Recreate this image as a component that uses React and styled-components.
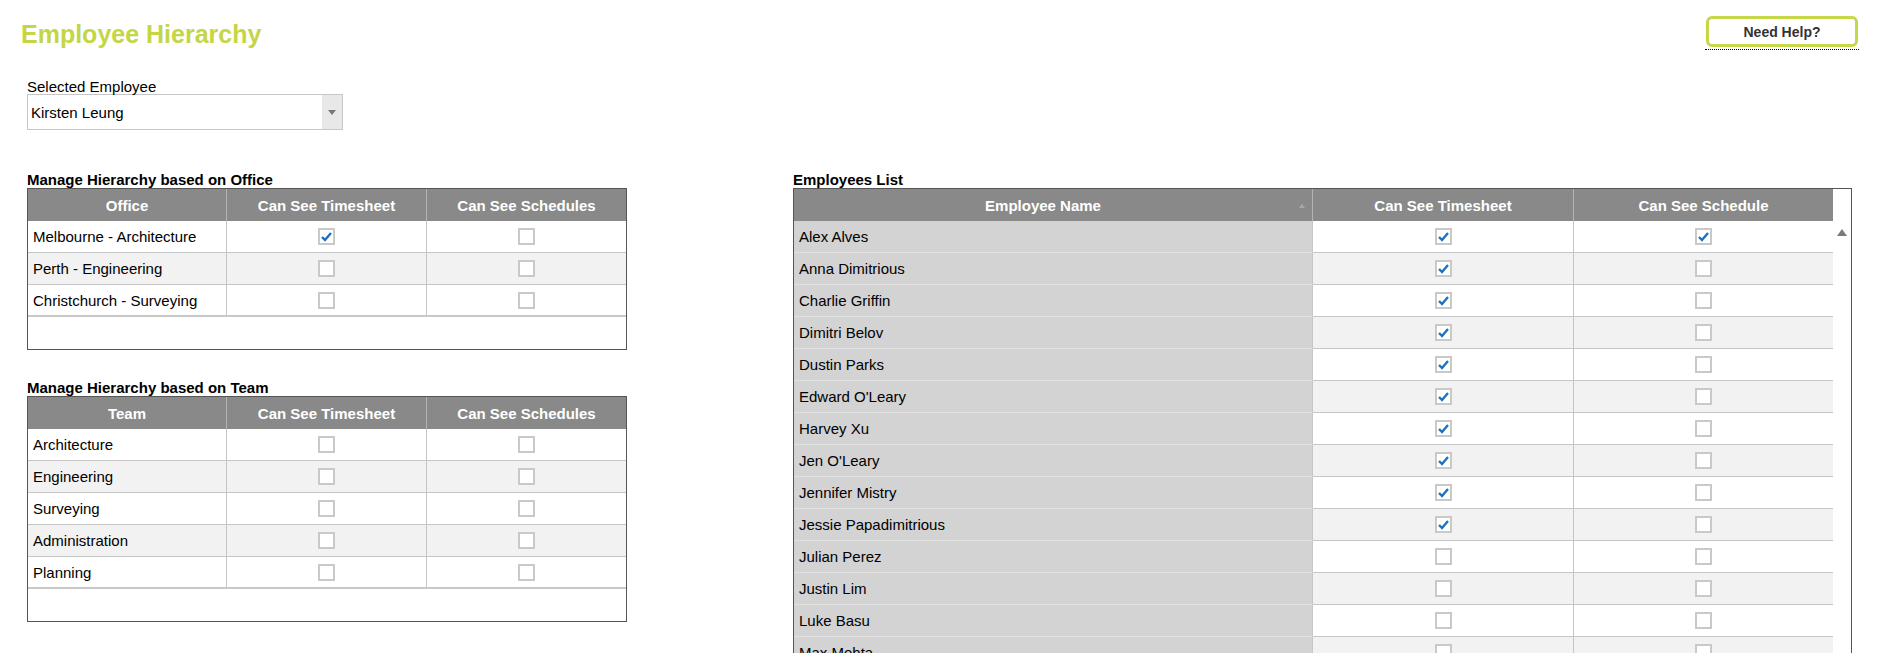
import React from 'react';
import styled, { createGlobalStyle } from 'styled-components';

const GlobalStyle = createGlobalStyle`
  html, body {
    margin: 0;
    padding: 0;
    background: #fff;
    overflow: hidden;
  }
  body {
    font-family: Arial, "Liberation Sans", sans-serif;
    color: #000;
  }
`;

const Page = styled.div`
  width: 1880px;
  height: 653px;
  overflow: hidden;
`;

const TopBar = styled.div`
  display: flex;
  justify-content: space-between;
  align-items: flex-start;
  padding: 0 21px 0 21px;
`;

const Title = styled.h1`
  margin: 19px 0 0;
  font-size: 25px;
  line-height: 30px;
  font-weight: bold;
  color: #c4d645;
`;

const HelpWrap = styled.div`
  margin-top: 16px;
  padding: 0 1px 2px;
  border-bottom: 1px dotted #000;
`;

const HelpButton = styled.button`
  display: block;
  width: 152px;
  height: 31px;
  box-sizing: border-box;
  border: 3px solid #c6d84a;
  border-radius: 6px;
  background: #fff;
  font-family: Arial, "Liberation Sans", sans-serif;
  font-size: 14px;
  font-weight: bold;
  color: #333;
  padding: 0;
`;

const Picker = styled.div`
  margin-top: 29px;
  padding-left: 27px;
`;

const PickerLabel = styled.div`
  font-size: 15px;
  line-height: 15px;
`;

const SelectBox = styled.div`
  display: flex;
  width: 316px;
  height: 36px;
  box-sizing: border-box;
  border: 1px solid #c6c6c6;
`;

const SelectValue = styled.div`
  flex: 1;
  display: flex;
  align-items: center;
  padding-left: 3px;
  font-size: 15px;
`;

const SelectArrow = styled.div`
  width: 20px;
  background: #e8e8e8;
  display: flex;
  align-items: center;
  justify-content: center;
  &::after {
    content: '';
    border-left: 4px solid transparent;
    border-right: 4px solid transparent;
    border-top: 5px solid #777;
  }
`;

const Main = styled.div`
  display: grid;
  grid-template-columns: 600px 1059px;
  column-gap: 166px;
  margin-top: 42px;
  padding-left: 27px;
`;

const Column = styled.div`
  display: flex;
  flex-direction: column;
`;

const Section = styled.section`
  margin-top: ${({ $gap }) => $gap || 0}px;
`;

const SectionTitle = styled.div`
  font-size: 15px;
  line-height: 16px;
  font-weight: bold;
`;

const Box = styled.div`
  border: 1px solid #555;
  box-sizing: border-box;
  padding-bottom: ${({ $tail }) => $tail || 0}px;
`;

const Row = styled.div`
  display: grid;
  grid-template-columns: ${({ $cols }) => $cols};
  height: 32px;
  box-sizing: border-box;
  border-bottom: ${({ $last }) => ($last ? '2px solid #c8c8c8' : '1px solid #c6c6c6')};
  background: ${({ $alt }) => ($alt ? '#f1f2f1' : '#fff')};
`;

const HeadRow = styled.div`
  display: grid;
  grid-template-columns: ${({ $cols }) => $cols};
  height: 32px;
  background: #898989;
`;

const HeadCell = styled.div`
  display: flex;
  align-items: center;
  justify-content: center;
  color: #fff;
  font-size: 15px;
  font-weight: bold;
  border-right: 1px solid #b4b4b4;
  padding-right: ${({ $pr }) => $pr || 0}px;
  position: relative;
  &:last-child {
    border-right: none;
  }
`;

const SortMark = styled.span`
  position: absolute;
  right: 7px;
  top: 15px;
  border-left: 3px solid transparent;
  border-right: 3px solid transparent;
  border-bottom: 4px solid #a9a9a9;
`;

const Cell = styled.div`
  display: flex;
  align-items: center;
  justify-content: ${({ $center }) => ($center ? 'center' : 'flex-start')};
  padding-left: ${({ $center }) => ($center ? 0 : 5)}px;
  font-size: 15px;
  border-right: 1px solid #c6c6c6;
  &:last-child {
    border-right: none;
  }
`;

const NameCell = styled(Cell)`
  background: #d3d3d3;
  border-right: 1px solid #c6c6c6;
`;

const Check = styled.span`
  width: 17px;
  height: 17px;
  box-sizing: border-box;
  border: 2px solid #c9c9c9;
  background: #fff;
  display: flex;
  align-items: center;
  justify-content: center;
`;

const ListFrame = styled.div`
  display: flex;
  height: 470px;
  border: 1px solid #555;
  overflow: hidden;
`;

const ListGrid = styled.div`
  flex: 1;
`;

const NameRow = styled(Row)`
  border-bottom: none;
  & > * {
    border-bottom: 1px solid #c6c6c6;
  }
  & > ${NameCell} {
    border-bottom-color: #e2e2e2;
  }
`;

const ScrollTrack = styled.div`
  width: 18px;
  display: flex;
  justify-content: center;
  padding-top: 40px;
  box-sizing: border-box;
  &::before {
    content: '';
    height: 0;
    border-left: 5px solid transparent;
    border-right: 5px solid transparent;
    border-bottom: 7px solid #7a7a7a;
  }
`;

const Tick = ({ on }) => (
  <Check>
    {on && (
      <svg width="13" height="13" viewBox="0 0 13 13">
        <polyline points="2,7 5,10 11,3" fill="none" stroke="#1f6fbf" strokeWidth="2.4" />
      </svg>
    )}
  </Check>
);

const offices = [
  ['Melbourne - Architecture', true, false],
  ['Perth - Engineering', false, false],
  ['Christchurch - Surveying', false, false],
];

const teams = [
  ['Architecture', false, false],
  ['Engineering', false, false],
  ['Surveying', false, false],
  ['Administration', false, false],
  ['Planning', false, false],
];

const employees = [
  ['Alex Alves', true, true],
  ['Anna Dimitrious', true, false],
  ['Charlie Griffin', true, false],
  ['Dimitri Belov', true, false],
  ['Dustin Parks', true, false],
  ["Edward O'Leary", true, false],
  ['Harvey Xu', true, false],
  ["Jen O'Leary", true, false],
  ['Jennifer Mistry', true, false],
  ['Jessie Papadimitrious', true, false],
  ['Julian Perez', false, false],
  ['Justin Lim', false, false],
  ['Luke Basu', false, false],
  ['Max Mehta', false, false],
  ['Nina Patel', false, false],
];

const SMALL_COLS = '199px 200px 1fr';
const LIST_COLS = '519px 261px 1fr';

const MiniTable = ({ title, first, rows, gap }) => (
  <Section $gap={gap}>
    <SectionTitle>{title}</SectionTitle>
    <Box $tail={32}>
      <HeadRow $cols={SMALL_COLS}>
        <HeadCell>{first}</HeadCell>
        <HeadCell>Can See Timesheet</HeadCell>
        <HeadCell>Can See Schedules</HeadCell>
      </HeadRow>
      {rows.map(([name, ts, sc], i) => (
        <Row key={name} $cols={SMALL_COLS} $alt={i % 2 === 1} $last={i === rows.length - 1}>
          <Cell>{name}</Cell>
          <Cell $center><Tick on={ts} /></Cell>
          <Cell $center><Tick on={sc} /></Cell>
        </Row>
      ))}
    </Box>
  </Section>
);

const App = () => (
  <Page>
    <GlobalStyle />
    <TopBar>
      <Title>Employee Hierarchy</Title>
      <HelpWrap>
        <HelpButton>Need Help?</HelpButton>
      </HelpWrap>
    </TopBar>

    <Picker>
      <PickerLabel>Selected Employee</PickerLabel>
      <SelectBox>
        <SelectValue>Kirsten Leung</SelectValue>
        <SelectArrow />
      </SelectBox>
    </Picker>

    <Main>
      <Column>
        <MiniTable title="Manage Hierarchy based on Office" first="Office" rows={offices} />
        <MiniTable title="Manage Hierarchy based on Team" first="Team" rows={teams} gap={30} />
      </Column>

      <Column>
        <Section>
          <SectionTitle>Employees List</SectionTitle>
          <ListFrame>
            <ListGrid>
              <HeadRow $cols={LIST_COLS}>
                <HeadCell $pr={20}>
                  Employee Name
                  <SortMark />
                </HeadCell>
                <HeadCell>Can See Timesheet</HeadCell>
                <HeadCell>Can See Schedule</HeadCell>
              </HeadRow>
              {employees.map(([name, ts, sc], i) => (
                <NameRow key={name} $cols={LIST_COLS} $alt={i % 2 === 1}>
                  <NameCell>{name}</NameCell>
                  <Cell $center><Tick on={ts} /></Cell>
                  <Cell $center><Tick on={sc} /></Cell>
                </NameRow>
              ))}
            </ListGrid>
            <ScrollTrack />
          </ListFrame>
        </Section>
      </Column>
    </Main>
  </Page>
);

export default App;
